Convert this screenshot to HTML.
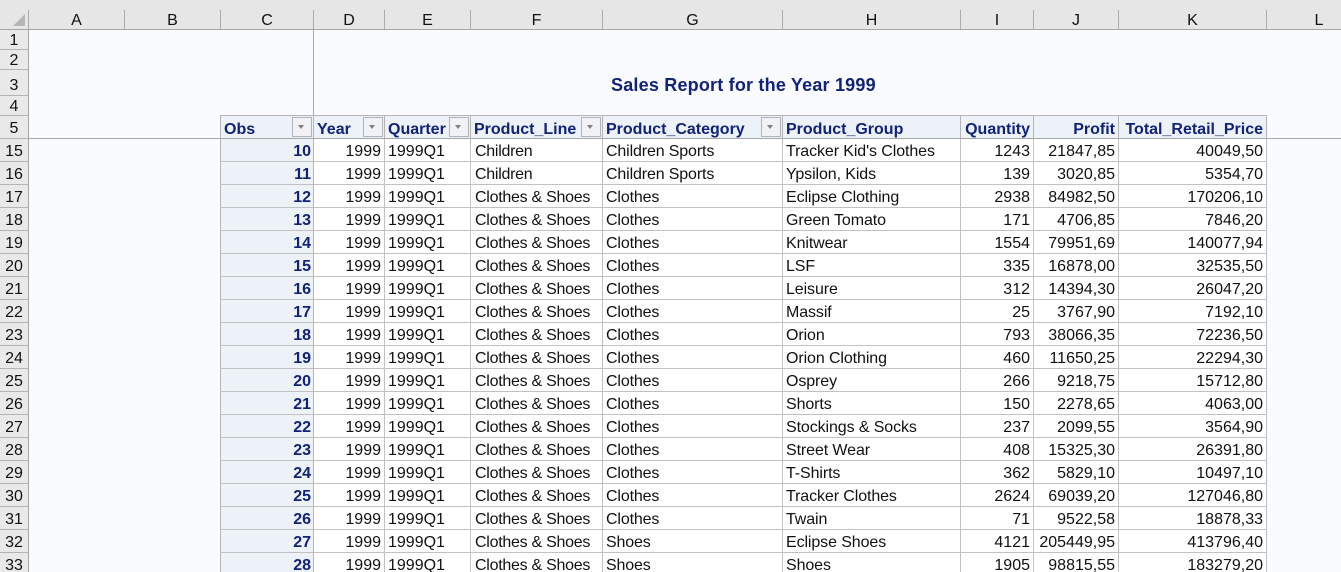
<!DOCTYPE html>
<html><head><meta charset="utf-8"><title>Sales Report</title>
<style>
html,body{margin:0;padding:0;width:1341px;height:572px;overflow:hidden;background:#FAFBFE}
body{position:relative;font-family:"Liberation Sans",Arial,sans-serif;font-size:16px;color:#111}
.a{position:absolute}
#top{left:0;top:0;width:1341px;height:29px;background:#E6E6E6;border-bottom:1px solid #A6A6A6;box-sizing:content-box}
.ch{position:absolute;top:10px;height:19px;line-height:21px;text-align:center;border-right:1px solid #ABABAB;color:#111;box-sizing:border-box}
#rh{left:0;top:30px;width:28px;height:542px;background:#E9E9E9;border-right:1px solid #A6A6A6}
.rw{position:absolute;left:0;width:28px;padding-top:1px;text-align:center;border-bottom:1px solid #B4B4B4;box-sizing:border-box;color:#111;overflow:hidden}
#tbl{position:absolute;left:220px;top:115px;border-collapse:separate;border-spacing:0;table-layout:fixed;width:1047px}
#tbl td,#tbl th{height:23px;box-sizing:border-box;border-right:1px solid #C1C1C1;border-bottom:1px solid #C1C1C1;padding:4px 3px 0 3px;line-height:18px;font-size:16px;white-space:nowrap;overflow:hidden;background:#fff;font-weight:normal;text-align:left}
#tbl tr:first-child th{height:24px;background:#EDF2F9;color:#112277;font-weight:bold;border-top:1px solid #B4B4B4;border-bottom:1px solid #A6A6A6;border-right-color:#B4B4B4;padding:6px 3px 0 3px;line-height:16px;position:relative}
#tbl th.o,#tbl td.o{border-left:1px solid #B4B4B4}
#tbl td.o{background:#EDF2F9;color:#112277;font-weight:bold;text-align:right;border-right-color:#B4B4B4;padding-right:2px}
#tbl .r{text-align:right!important}
#tbl td:nth-child(4){letter-spacing:-.27px;padding-left:4px}
#tbl td:nth-child(5){letter-spacing:-.14px}
#tbl td:nth-child(6){letter-spacing:-.1px}
.f{position:absolute;top:117px;width:20px;height:20px;box-sizing:border-box;border:1px solid #AEB4BC;background:#F0F2F6}
.f:after{content:"";position:absolute;left:5px;top:7px;border-left:3.5px solid transparent;border-right:3.5px solid transparent;border-top:4px solid #808080}
</style></head><body>
<div class="a" id="top"></div>
<div class="a" style="left:13px;top:14px;width:0;height:0;border-left:12px solid transparent;border-bottom:12px solid #B5B5B5"></div>
<div class="a" style="left:28px;top:10px;width:1px;height:19px;background:#ABABAB"></div>
<div class="ch" style="left:29px;width:96px">A</div>
<div class="ch" style="left:125px;width:96px">B</div>
<div class="ch" style="left:221px;width:93px">C</div>
<div class="ch" style="left:314px;width:71px">D</div>
<div class="ch" style="left:385px;width:86px">E</div>
<div class="ch" style="left:471px;width:132px">F</div>
<div class="ch" style="left:603px;width:180px">G</div>
<div class="ch" style="left:783px;width:178px">H</div>
<div class="ch" style="left:961px;width:73px">I</div>
<div class="ch" style="left:1034px;width:85px">J</div>
<div class="ch" style="left:1119px;width:148px">K</div>
<div class="ch" style="left:1267px;width:104px;border:0">L</div>
<div class="a" id="rh"></div>
<div class="rw" style="top:30px;height:20px;line-height:20px">1</div>
<div class="rw" style="top:50px;height:20px;line-height:20px">2</div>
<div class="rw" style="top:70px;height:26px;line-height:30px">3</div>
<div class="rw" style="top:96px;height:20px;line-height:20px">4</div>
<div class="rw" style="top:116px;height:23px;line-height:23px">5</div>
<div class="rw" style="top:139px;height:23px;line-height:23px">15</div>
<div class="rw" style="top:162px;height:23px;line-height:23px">16</div>
<div class="rw" style="top:185px;height:23px;line-height:23px">17</div>
<div class="rw" style="top:208px;height:23px;line-height:23px">18</div>
<div class="rw" style="top:231px;height:23px;line-height:23px">19</div>
<div class="rw" style="top:254px;height:23px;line-height:23px">20</div>
<div class="rw" style="top:277px;height:23px;line-height:23px">21</div>
<div class="rw" style="top:300px;height:23px;line-height:23px">22</div>
<div class="rw" style="top:323px;height:23px;line-height:23px">23</div>
<div class="rw" style="top:346px;height:23px;line-height:23px">24</div>
<div class="rw" style="top:369px;height:23px;line-height:23px">25</div>
<div class="rw" style="top:392px;height:23px;line-height:23px">26</div>
<div class="rw" style="top:415px;height:23px;line-height:23px">27</div>
<div class="rw" style="top:438px;height:23px;line-height:23px">28</div>
<div class="rw" style="top:461px;height:23px;line-height:23px">29</div>
<div class="rw" style="top:484px;height:23px;line-height:23px">30</div>
<div class="rw" style="top:507px;height:23px;line-height:23px">31</div>
<div class="rw" style="top:530px;height:23px;line-height:23px">32</div>
<div class="rw" style="top:553px;height:23px;line-height:23px">33</div>
<div class="a" style="left:313px;top:30px;width:1px;height:86px;background:#A6A6A6"></div>
<div class="a" style="left:29px;top:138px;width:1312px;height:1px;background:#A6A6A6"></div>
<div class="a" style="left:611px;top:74px;font-size:18px;line-height:22px;font-weight:bold;letter-spacing:.2px;color:#112277;white-space:nowrap">Sales Report for the Year 1999</div>
<table id="tbl">
<colgroup><col style="width:94px"><col style="width:71px"><col style="width:86px"><col style="width:132px"><col style="width:180px"><col style="width:178px"><col style="width:73px"><col style="width:85px"><col style="width:148px"></colgroup>
<tr><th class="o">Obs</th><th>Year</th><th>Quarter</th><th>Product_Line</th><th>Product_Category</th><th>Product_Group</th><th class="r">Quantity</th><th class="r">Profit</th><th class="r">Total_Retail_Price</th></tr>
<tr><td class="o">10</td><td class="r">1999</td><td>1999Q1</td><td>Children</td><td>Children Sports</td><td>Tracker Kid's Clothes</td><td class="r">1243</td><td class="r">21847,85</td><td class="r">40049,50</td></tr>
<tr><td class="o">11</td><td class="r">1999</td><td>1999Q1</td><td>Children</td><td>Children Sports</td><td>Ypsilon, Kids</td><td class="r">139</td><td class="r">3020,85</td><td class="r">5354,70</td></tr>
<tr><td class="o">12</td><td class="r">1999</td><td>1999Q1</td><td>Clothes &amp; Shoes</td><td>Clothes</td><td>Eclipse Clothing</td><td class="r">2938</td><td class="r">84982,50</td><td class="r">170206,10</td></tr>
<tr><td class="o">13</td><td class="r">1999</td><td>1999Q1</td><td>Clothes &amp; Shoes</td><td>Clothes</td><td>Green Tomato</td><td class="r">171</td><td class="r">4706,85</td><td class="r">7846,20</td></tr>
<tr><td class="o">14</td><td class="r">1999</td><td>1999Q1</td><td>Clothes &amp; Shoes</td><td>Clothes</td><td>Knitwear</td><td class="r">1554</td><td class="r">79951,69</td><td class="r">140077,94</td></tr>
<tr><td class="o">15</td><td class="r">1999</td><td>1999Q1</td><td>Clothes &amp; Shoes</td><td>Clothes</td><td>LSF</td><td class="r">335</td><td class="r">16878,00</td><td class="r">32535,50</td></tr>
<tr><td class="o">16</td><td class="r">1999</td><td>1999Q1</td><td>Clothes &amp; Shoes</td><td>Clothes</td><td>Leisure</td><td class="r">312</td><td class="r">14394,30</td><td class="r">26047,20</td></tr>
<tr><td class="o">17</td><td class="r">1999</td><td>1999Q1</td><td>Clothes &amp; Shoes</td><td>Clothes</td><td>Massif</td><td class="r">25</td><td class="r">3767,90</td><td class="r">7192,10</td></tr>
<tr><td class="o">18</td><td class="r">1999</td><td>1999Q1</td><td>Clothes &amp; Shoes</td><td>Clothes</td><td>Orion</td><td class="r">793</td><td class="r">38066,35</td><td class="r">72236,50</td></tr>
<tr><td class="o">19</td><td class="r">1999</td><td>1999Q1</td><td>Clothes &amp; Shoes</td><td>Clothes</td><td>Orion Clothing</td><td class="r">460</td><td class="r">11650,25</td><td class="r">22294,30</td></tr>
<tr><td class="o">20</td><td class="r">1999</td><td>1999Q1</td><td>Clothes &amp; Shoes</td><td>Clothes</td><td>Osprey</td><td class="r">266</td><td class="r">9218,75</td><td class="r">15712,80</td></tr>
<tr><td class="o">21</td><td class="r">1999</td><td>1999Q1</td><td>Clothes &amp; Shoes</td><td>Clothes</td><td>Shorts</td><td class="r">150</td><td class="r">2278,65</td><td class="r">4063,00</td></tr>
<tr><td class="o">22</td><td class="r">1999</td><td>1999Q1</td><td>Clothes &amp; Shoes</td><td>Clothes</td><td>Stockings &amp; Socks</td><td class="r">237</td><td class="r">2099,55</td><td class="r">3564,90</td></tr>
<tr><td class="o">23</td><td class="r">1999</td><td>1999Q1</td><td>Clothes &amp; Shoes</td><td>Clothes</td><td>Street Wear</td><td class="r">408</td><td class="r">15325,30</td><td class="r">26391,80</td></tr>
<tr><td class="o">24</td><td class="r">1999</td><td>1999Q1</td><td>Clothes &amp; Shoes</td><td>Clothes</td><td>T-Shirts</td><td class="r">362</td><td class="r">5829,10</td><td class="r">10497,10</td></tr>
<tr><td class="o">25</td><td class="r">1999</td><td>1999Q1</td><td>Clothes &amp; Shoes</td><td>Clothes</td><td>Tracker Clothes</td><td class="r">2624</td><td class="r">69039,20</td><td class="r">127046,80</td></tr>
<tr><td class="o">26</td><td class="r">1999</td><td>1999Q1</td><td>Clothes &amp; Shoes</td><td>Clothes</td><td>Twain</td><td class="r">71</td><td class="r">9522,58</td><td class="r">18878,33</td></tr>
<tr><td class="o">27</td><td class="r">1999</td><td>1999Q1</td><td>Clothes &amp; Shoes</td><td>Shoes</td><td>Eclipse Shoes</td><td class="r">4121</td><td class="r">205449,95</td><td class="r">413796,40</td></tr>
<tr><td class="o">28</td><td class="r">1999</td><td>1999Q1</td><td>Clothes &amp; Shoes</td><td>Shoes</td><td>Shoes</td><td class="r">1905</td><td class="r">98815,55</td><td class="r">183279,20</td></tr>
</table>
<div class="f" style="left:292px"></div>
<div class="f" style="left:363px"></div>
<div class="f" style="left:449px"></div>
<div class="f" style="left:581px"></div>
<div class="f" style="left:761px"></div>
</body></html>
